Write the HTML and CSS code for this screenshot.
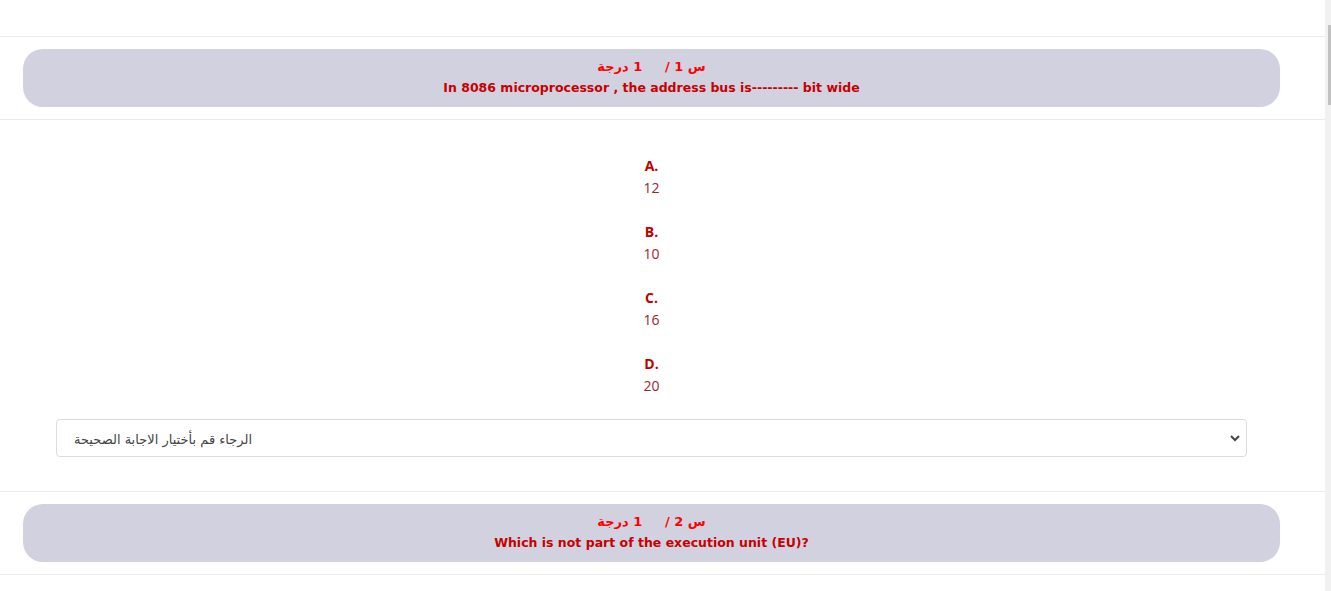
FILE: index.html
```html
<!DOCTYPE html>
<html lang="ar">
<head>
<meta charset="utf-8">
<link rel="stylesheet" href="styles.css">
</head>
<body>
<div class="page">
  <div class="top-space"></div>
  <section class="question">
    <div class="q-head">
      <div class="q-num" dir="rtl">س 1 /&nbsp;&nbsp;&nbsp;&nbsp; 1 درجة</div>
      <div class="q-text" dir="ltr">In 8086 microprocessor , the address bus is--------- bit wide</div>
    </div>
  </section>
  <section class="answers">
    <div class="opt"><div class="opt-label">A.</div><div class="opt-val">12</div></div>
    <div class="opt"><div class="opt-label">B.</div><div class="opt-val">10</div></div>
    <div class="opt"><div class="opt-label">C.</div><div class="opt-val">16</div></div>
    <div class="opt"><div class="opt-label">D.</div><div class="opt-val">20</div></div>
    <div class="select-wrap">
      <div class="select">
        <span class="select-text" dir="rtl">الرجاء قم بأختيار الاجابة الصحيحة</span>
        <svg class="chev" width="12" height="12" viewBox="0 0 12 12"><path d="M2 4l4 4 4-4" fill="none" stroke="#444" stroke-width="2"/></svg>
      </div>
    </div>
  </section>
  <section class="question">
    <div class="q-head">
      <div class="q-num" dir="rtl">س 2 /&nbsp;&nbsp;&nbsp;&nbsp; 1 درجة</div>
      <div class="q-text" dir="ltr">Which is not part of the execution unit (EU)?</div>
    </div>
  </section>
</div>
<div class="scrollbar"><div class="thumb"></div></div>
</body>
</html>
```
FILE: styles.css
```css
html, body {
  margin: 0;
  padding: 0;
  background: #fff;
  overflow: hidden;
}
body {
  font-family: "Open Sans", "Liberation Sans", sans-serif;
  width: 1331px;
  height: 591px;
}
.page {
  width: 1325px;
}
.top-space {
  height: 36px;
  border-bottom: 1px solid #ebebeb;
}
.question {
  padding: 12px 45px 12px 23px;
  border-bottom: 1px solid #ebebeb;
}
.q-head {
  background: #d2d1e0;
  border-radius: 20px;
  height: 58px;
  display: flex;
  flex-direction: column;
  align-items: center;
  justify-content: center;
  font-family: "DejaVu Sans", sans-serif;
  font-weight: bold;
  font-size: 12.5px;
  line-height: 21px;
  padding-bottom: 3px;
  box-sizing: border-box;
}
.q-num {
  color: #ff0000;
  font-size: 13px;
}
.q-text {
  color: #c80000;
}
.answers {
  padding: 35px 78px 34px 56px;
  border-bottom: 1px solid #ebebeb;
  display: flex;
  flex-direction: column;
  align-items: center;
}
.opt {
  display: flex;
  flex-direction: column;
  align-items: center;
  height: 66px;
  font-size: 14px;
  line-height: 22px;
}
.opt-label {
  color: #c00000;
  font-weight: bold;
}
.opt-val {
  color: #a0232e;
}
.select-wrap {
  align-self: stretch;
}
.select {
  height: 38px;
  box-sizing: border-box;
  border: 1px solid #dcdcdc;
  border-radius: 4px;
  display: flex;
  align-items: center;
  justify-content: space-between;
  padding: 3px 4px 0 17px;
}
.select-text {
  font-family: "DejaVu Sans", sans-serif;
  font-size: 13px;
  color: #444;
}
.chev {
  margin-right: 1px;
  margin-bottom: 3px;
}
.scrollbar {
  position: fixed;
  top: 0;
  right: 0;
  width: 6px;
  height: 591px;
  background: #f1f1f1;
}
.thumb {
  position: absolute;
  top: 25px;
  right: 0;
  width: 3px;
  height: 80px;
  background: #c1c1c1;
}
```
